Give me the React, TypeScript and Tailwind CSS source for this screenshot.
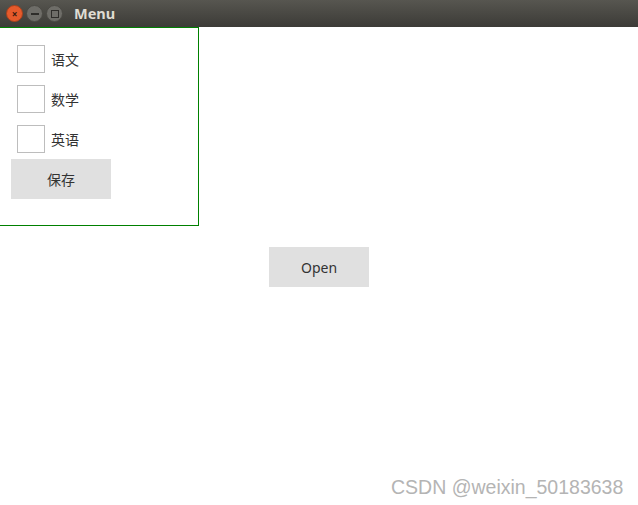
import React from "react";

const font = { fontFamily: '"Noto Sans", "Noto Sans CJK SC", sans-serif' };

function Check({ label }: { label: string }) {
  return (
    <div className="flex items-center h-[28px]">
      <div className="w-[28px] h-[28px] border border-[#bdbdbd] bg-white" />
      <span className="ml-[6px] text-[14px] text-[#333]">{label}</span>
    </div>
  );
}

export default function App() {
  return (
    <div className="w-[638px] h-[505px] bg-white relative overflow-hidden" style={font}>
      <div className="h-[27px] bg-gradient-to-b from-[#575650] to-[#3c3b37] flex items-center">
        <div className="flex items-center ml-[6px] gap-[3px]">
          <div className="w-[17px] h-[17px] rounded-full bg-[#e65a2b] border border-[#a8401c] flex items-center justify-center text-[#3a1a0f] text-[10px] leading-none font-bold">×</div>
          <div className="w-[17px] h-[17px] rounded-full bg-[#6e6d68] border border-[#4a4944] flex items-center justify-center">
            <div className="w-[8px] h-[2px] bg-[#2e2d2a]" />
          </div>
          <div className="w-[17px] h-[17px] rounded-full bg-[#6e6d68] border border-[#4a4944] flex items-center justify-center">
            <div className="w-[8px] h-[8px] border border-[#2e2d2a]" />
          </div>
        </div>
        <span className="ml-[11px] text-[14.5px] font-bold text-[#dfdbd2]">Menu</span>
      </div>
      <div className="w-[200px] h-[199px] -ml-[1px] border border-solid relative" style={{ borderColor: "#008000" }}>
        <div className="flex flex-col gap-[12px] pl-[17px] pt-[17px]">
          <Check label="语文" />
          <Check label="数学" />
          <Check label="英语" />
        </div>
        <button className="absolute left-[11px] top-[131px] w-[100px] h-[40px] bg-[#e0e0e0] text-[14px] text-[#333]">保存</button>
      </div>
      <div className="flex justify-center mt-[21px]">
        <button className="w-[100px] h-[40px] bg-[#e0e0e0] text-[14px] text-[#333]">Open</button>
      </div>
      <div className="absolute left-[391px] top-[473px] text-[19.5px] text-[#b4b4b4]" style={{ fontFamily: '"Liberation Sans", Arial, sans-serif' }}>
        CSDN @weixin_50183638
      </div>
    </div>
  );
}
